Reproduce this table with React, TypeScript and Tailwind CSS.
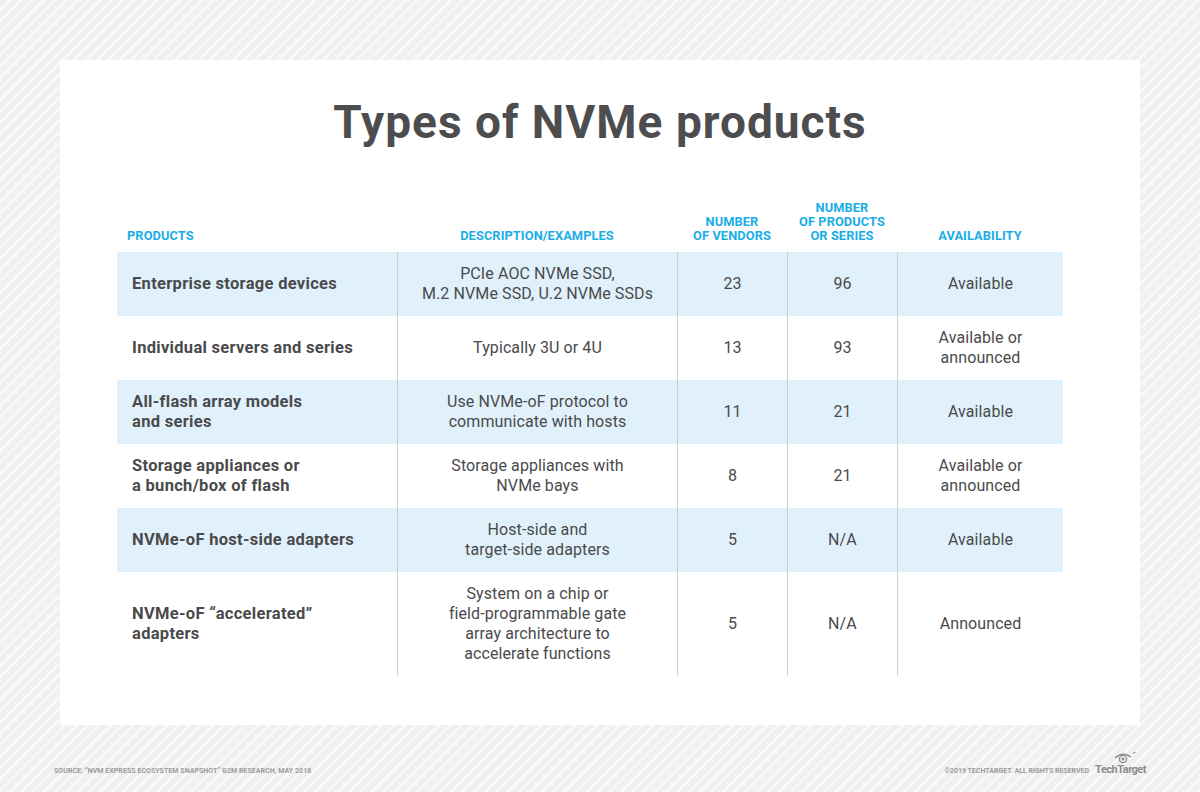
import React from "react";

type Row = {
  product: string[];
  desc: string[];
  vendors: string;
  count: string;
  avail: string[];
  tint: boolean;
  tall?: boolean;
};

const rows: Row[] = [
  {
    product: ["Enterprise storage devices"],
    desc: ["PCIe AOC NVMe SSD,", "M.2 NVMe SSD, U.2 NVMe SSDs"],
    vendors: "23",
    count: "96",
    avail: ["Available"],
    tint: true,
  },
  {
    product: ["Individual servers and series"],
    desc: ["Typically 3U or 4U"],
    vendors: "13",
    count: "93",
    avail: ["Available or", "announced"],
    tint: false,
  },
  {
    product: ["All-flash array models", "and series"],
    desc: ["Use NVMe-oF protocol to", "communicate with hosts"],
    vendors: "11",
    count: "21",
    avail: ["Available"],
    tint: true,
  },
  {
    product: ["Storage appliances or", "a bunch/box of flash"],
    desc: ["Storage appliances with", "NVMe bays"],
    vendors: "8",
    count: "21",
    avail: ["Available or", "announced"],
    tint: false,
  },
  {
    product: ["NVMe-oF host-side adapters"],
    desc: ["Host-side and", "target-side adapters"],
    vendors: "5",
    count: "N/A",
    avail: ["Available"],
    tint: true,
  },
  {
    product: ["NVMe-oF \u201Caccelerated\u201D", "adapters"],
    desc: [
      "System on a chip or",
      "field-programmable gate",
      "array architecture to",
      "accelerate functions",
    ],
    vendors: "5",
    count: "N/A",
    avail: ["Announced"],
    tint: false,
    tall: true,
  },
];

function Lines({ lines }: { lines: string[] }) {
  return (
    <div>
      {lines.map((l, i) => (
        <div key={i}>{l}</div>
      ))}
    </div>
  );
}

export default function App() {
  return (
    <div className="w-[1200px] h-[792px] flex flex-col bg-[repeating-linear-gradient(135deg,#f0f0f0_0px,#f0f0f0_6px,#fbfbfb_6px,#fbfbfb_8px)] font-['Roboto',sans-serif]">
      <div className="pt-[60px] px-[60px]">
        <div className="h-[665px] bg-white flex flex-col pt-[39px]">
          <h1 className="self-center text-[46px] leading-[46px] font-bold text-[#4d4d4f] tracking-[1px]">
            Types of NVMe products
          </h1>
          <div className="mt-[45px] ml-[57px] w-[946px]">
            <div className="grid grid-cols-[280px_280px_110px_110px_166px] h-[62px] items-end pb-[9px] text-[12.8px] leading-[14px] font-bold text-[#1aaee6] tracking-[0.1px]">
              <div className="pl-[10px]">PRODUCTS</div>
              <div className="text-center">DESCRIPTION/EXAMPLES</div>
              <div className="text-center">
                <div>NUMBER</div>
                <div>OF VENDORS</div>
              </div>
              <div className="text-center">
                <div>NUMBER</div>
                <div>OF PRODUCTS</div>
                <div>OR SERIES</div>
              </div>
              <div className="text-center">AVAILABILITY</div>
            </div>
            {rows.map((r, i) => (
              <div
                key={i}
                className={
                  "grid grid-cols-[280px_280px_110px_110px_166px] text-[16px] leading-[20px] text-[#4a4a4c] tracking-[0.1px] " +
                  (r.tall ? "h-[104px] " : "h-[64px] ") +
                  (r.tint ? "bg-[#e0f1fb]" : "bg-white")
                }
              >
                <div className="flex items-center pl-[15px] font-bold text-[16.5px] tracking-[0.3px]">
                  <Lines lines={r.product} />
                </div>
                <div className="flex items-center justify-center text-center border-l border-[#cdd0d2]">
                  <Lines lines={r.desc} />
                </div>
                <div className="flex items-center justify-center text-center border-l border-[#cdd0d2]">
                  {r.vendors}
                </div>
                <div className="flex items-center justify-center text-center border-l border-[#cdd0d2]">
                  {r.count}
                </div>
                <div className="flex items-center justify-center text-center border-l border-[#cdd0d2]">
                  <Lines lines={r.avail} />
                </div>
              </div>
            ))}
          </div>
        </div>
      </div>
      <div className="flex-1 flex items-end justify-between pl-[54px] pr-[54px] pb-[17px]">
        <div className="text-[7px] leading-[8px] font-bold text-[#9b9b9b] tracking-[0.05px]">
          SOURCE: &ldquo;NVM EXPRESS ECOSYSTEM SNAPSHOT&rdquo; G2M RESEARCH, MAY 2018
        </div>
        <div className="flex items-end gap-[6px]">
          <div className="text-[7px] leading-[8px] font-bold text-[#9b9b9b]">
            &copy;2019 TECHTARGET. ALL RIGHTS RESERVED
          </div>
          <div className="relative">
            <svg
              className="absolute left-[18px] top-[-13px]"
              width="24"
              height="13"
              viewBox="0 0 24 13"
              fill="none"
            >
              <path d="M2 7 Q10 0 18 6" stroke="#8c8c8c" strokeWidth="1.4" fill="none" />
              <circle cx="10" cy="8" r="3.6" stroke="#8c8c8c" strokeWidth="1.3" />
              <circle cx="10" cy="8" r="1.5" fill="#8c8c8c" />
              <path d="M20 2.5 L22.5 1" stroke="#8c8c8c" strokeWidth="1.1" />
            </svg>
            <div className="text-[11px] leading-[11px] font-bold text-[#8c8c8c] tracking-[-0.5px]">
              TechTarget
            </div>
          </div>
        </div>
      </div>
    </div>
  );
}
